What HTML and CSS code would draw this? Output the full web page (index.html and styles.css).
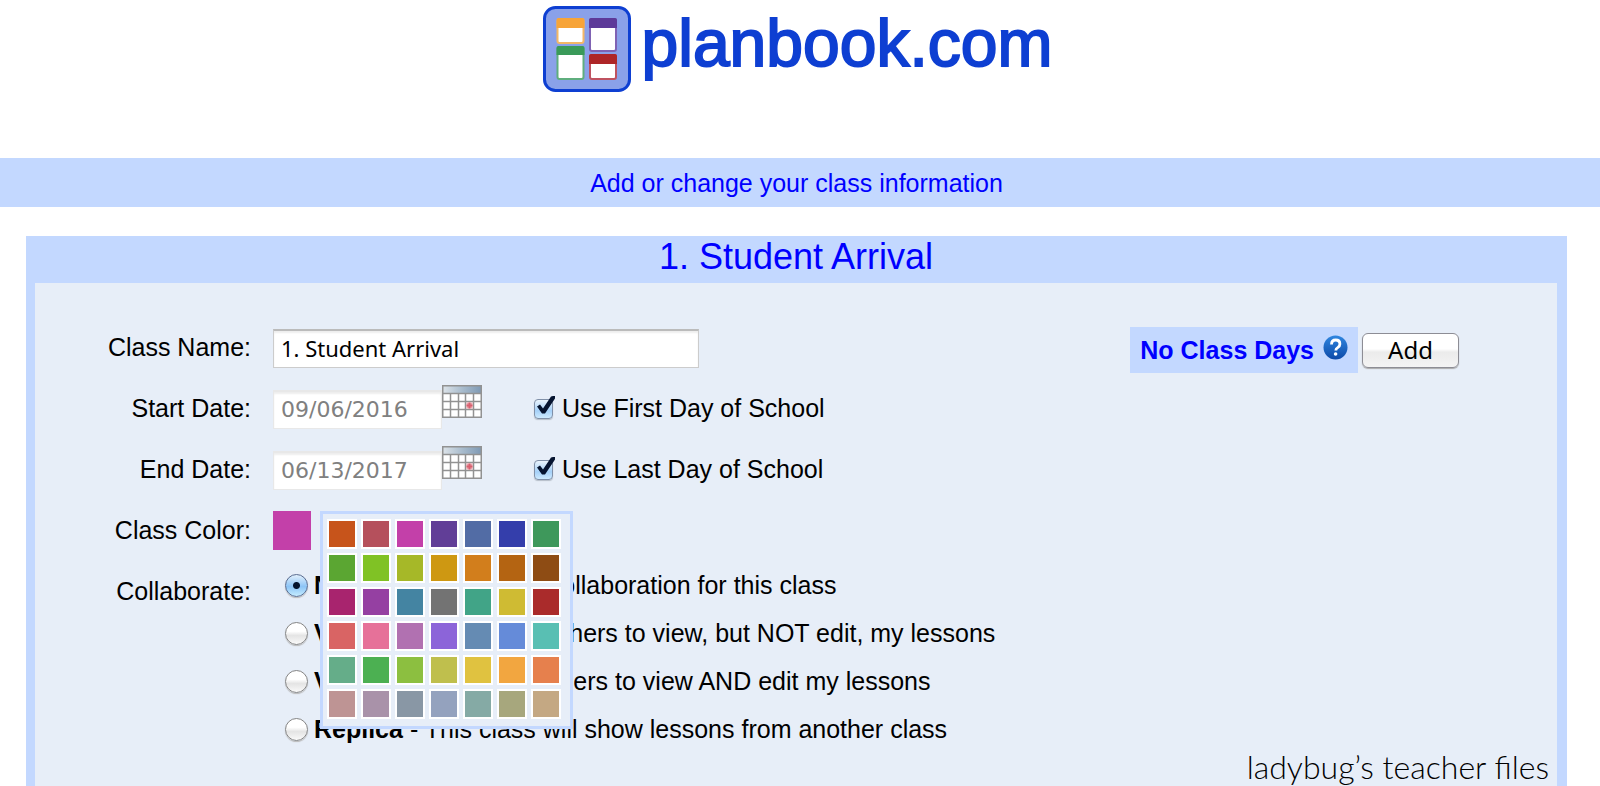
FILE: index.html
```html
<!DOCTYPE html>
<html lang="en">
<head>
<meta charset="utf-8">
<title>planbook.com</title>
<link rel="stylesheet" href="styles.css">
</head>
<body>
  <header class="site-header">
    <svg class="logo-icon" viewBox="0 0 88 86">
      <rect x="1.5" y="1.5" width="85" height="83" rx="11" fill="#8aa1e9" stroke="#0e3fd2" stroke-width="3"/>
      <rect x="14.5" y="13" width="26" height="24" rx="2" fill="#fff" stroke="#f3b766" stroke-width="2"/>
      <path d="M13.5 22V14q0-2 2-2h24q2 0 2 2v8z" fill="#f7a438"/>
      <rect x="47" y="13" width="26" height="32" rx="2" fill="#fff" stroke="#7f62b3" stroke-width="2"/>
      <path d="M46 22V14q0-2 2-2h24q2 0 2 2v8z" fill="#5d3a99"/>
      <rect x="14.5" y="41" width="26" height="32" rx="2" fill="#fff" stroke="#5fae7e" stroke-width="2"/>
      <path d="M13.5 49V42q0-2 2-2h24q2 0 2 2v7z" fill="#3a9a59"/>
      <rect x="47" y="49" width="26" height="24" rx="2" fill="#fff" stroke="#bf5260" stroke-width="2"/>
      <path d="M46 58V50q0-2 2-2h24q2 0 2 2v8z" fill="#ae2527"/>
    </svg>
    <span class="logo-text">planbook.com</span>
  </header>

  <div class="banner">Add or change your class information</div>

  <main class="panel">
    <h1 class="panel-title">1. Student Arrival</h1>
    <form class="panel-body">
      <div class="columns">
        <div class="fields">
          <label class="field-label" for="class_name">Class Name:</label>
          <div class="field"><input class="text-box" type="text" id="class_name" value="1. Student Arrival"></div>

          <label class="field-label" for="start_date">Start Date:</label>
          <div class="field">
            <input class="text-box date-box" type="text" id="start_date" value="09/06/2016" disabled>
            <svg class="calendar" viewBox="0 0 40 33"><use href="#calendar"/></svg>
            <label class="check-label"><input type="checkbox" checked>Use First Day of School</label>
          </div>

          <label class="field-label" for="end_date">End Date:</label>
          <div class="field">
            <input class="text-box date-box" type="text" id="end_date" value="06/13/2017" disabled>
            <svg class="calendar" viewBox="0 0 40 33"><use href="#calendar"/></svg>
            <label class="check-label"><input type="checkbox" checked>Use Last Day of School</label>
          </div>

          <label class="field-label" for="class_color">Class Color:</label>
          <div class="field color-field">
            <button class="color-button" type="button" id="class_color" aria-label="Class color"></button>
            <div class="palette" id="palette"></div>
          </div>

          <span class="field-label" id="collaborate">Collaborate:</span>
          <div class="radio-list" role="radiogroup" aria-labelledby="collaborate">
            <label class="radio-label"><input type="radio" name="collab" checked><span><b>None</b> - I do not want collaboration for this class</span></label>
            <label class="radio-label"><input type="radio" name="collab"><span><b>View</b> - Allow other teachers to view, but NOT edit, my lessons</span></label>
            <label class="radio-label"><input type="radio" name="collab"><span><b>View/Edit</b> - Allow teachers to view AND edit my lessons</span></label>
            <label class="radio-label"><input type="radio" name="collab"><span><b>Replica</b> - This class will show lessons from another class</span></label>
          </div>
        </div>

        <div class="no-class">
          <div class="no-class-title">
            No Class Days
            <svg class="help" viewBox="0 0 25 25">
              <circle cx="12.5" cy="12.5" r="12" fill="url(#blue)"/>
              <path d="M8.5 9.5q0-4.5 4.2-4.5t4.2 4q0 2.3-2.2 3.6-1.9 1.1-1.9 3" fill="none" stroke="#fff" stroke-width="2.8"/>
              <circle cx="12.6" cy="19" r="1.8" fill="#fff"/>
            </svg>
          </div>
          <button class="add-button" type="button">Add</button>
        </div>
      </div>
      <p class="credit">ladybug’s teacher files</p>
    </form>
  </main>

  <svg class="defs">
    <defs>
      <linearGradient id="blue" x2="0" y2="1">
        <stop offset="0" stop-color="#2f86e0"/>
        <stop offset="1" stop-color="#0d4aa8"/>
      </linearGradient>
      <linearGradient id="steel">
        <stop offset="0" stop-color="#dfe5ea"/>
        <stop offset=".5" stop-color="#a9bccd"/>
        <stop offset="1" stop-color="#7d98b3"/>
      </linearGradient>
      <symbol id="calendar" viewBox="0 0 40 33">
        <rect width="40" height="33" fill="#fff"/>
        <rect width="40" height="8" fill="url(#steel)"/>
        <path d="M.75.75h38.5v31.5H.75zM0 8.5h40M0 16.5h40M0 24.5h40M8.5 8v25M16.5 8v25M23.5 8v25M31.5 8v25" fill="none" stroke="#929292" stroke-width="1.5"/>
        <rect x="24.5" y="17.5" width="6" height="6" fill="#e9a3ab"/>
        <path d="M27.5 17.5v6M24.5 20.5h6" stroke="#d9606f" stroke-width="2"/>
      </symbol>
    </defs>
  </svg>

<script>
var colors = [
  "#c7541b", "#b5505c", "#c340a9", "#613e97", "#526ca5", "#343eab", "#3e985b",
  "#5ba632", "#80c225", "#a6b828", "#ce9812", "#d27e1c", "#b46412", "#8e4c14",
  "#a8246e", "#9540a2", "#4484a2", "#737373", "#41a487", "#cfbb33", "#aa2b2b",
  "#d96464", "#e67199", "#b171b1", "#8c64d9", "#658bb3", "#658bd9", "#59bfb3",
  "#65ad89", "#4cb052", "#8cbf40", "#bfbf4d", "#e0c240", "#f2a640", "#e6804d",
  "#be9494", "#a992a9", "#8997a5", "#94a2be", "#85aaa5", "#a7a77d", "#c4a883"
];
var palette = document.getElementById("palette");
var current = document.getElementById("class_color");

colors.forEach(function(color){
  var swatch = document.createElement("button");
  swatch.type = "button";
  swatch.className = "swatch";
  swatch.style.backgroundColor = color;
  swatch.setAttribute("aria-label", color);
  swatch.onclick = function(){ current.style.backgroundColor = color; };
  palette.appendChild(swatch);
});
</script>
</body>
</html>
```
FILE: styles.css
```css
* {
  box-sizing: border-box;
}
body {
  margin: 0;
  min-height: 100vh;
  display: flex;
  flex-direction: column;
  background: #fff;
  color: #000;
  font-family: "Liberation Sans", Arial, sans-serif;
  font-size: 25px;
}
.defs {
  position: absolute;
  width: 0;
  height: 0;
}

/* logo and banner */
.site-header {
  display: flex;
  justify-content: center;
  align-items: flex-start;
  gap: 11px;
  padding: 6px 5px 66px 0;
}
.logo-icon {
  width: 88px;
  height: 86px;
}
.logo-text {
  font-size: 66px;
  line-height: 75px;
  color: #0e3fd2;
  -webkit-text-stroke: 2px #0e3fd2;
}
.banner {
  padding: 1px 7px 0 0;
  background: #c3d8ff;
  color: #00f;
  line-height: 48px;
  text-align: center;
}

/* class panel */
.panel {
  flex: 1;
  display: flex;
  flex-direction: column;
  margin: 29px 33px 0 26px;
  padding: 0 10px 0 9px;
  background: #c3d8ff;
}
.panel-title {
  margin: 0;
  color: #00f;
  font-size: 36px;
  font-weight: normal;
  line-height: 42px;
  padding-bottom: 5px;
  text-align: center;
}
.panel-body {
  flex: 1;
  display: flex;
  flex-direction: column;
  padding-top: 34px;
  background: #e7eef8;
}
.columns {
  display: flex;
  justify-content: space-between;
  align-items: flex-start;
}
.fields {
  display: grid;
  grid-template-columns: 216px auto;
  column-gap: 22px;
}
.field-label {
  line-height: 61px;
  text-align: right;
}
.field {
  display: flex;
  align-items: center;
  height: 61px;
}
.text-box {
  width: 426px;
  height: 39px;
  margin: 2px 0 0;
  padding: 0 7px 2px;
  border: 1px solid #ccc;
  border-top: 2px solid #bbb;
  background: #fff;
  box-shadow: inset 0 2px 2px #eee;
  color: #000;
  font-family: "Noto Sans", sans-serif;
  font-size: 22px;
}
.date-box {
  width: 169px;
  border-color: #e8e8e8;
  color: #808080;
  font-family: "DejaVu Sans", sans-serif;
}
.calendar {
  width: 40px;
  height: 33px;
  margin-bottom: 14px;
}
.check-label {
  display: flex;
  align-items: center;
  gap: 9px;
  margin-left: 52px;
}
input[type=checkbox] {
  appearance: none;
  position: relative;
  width: 19px;
  height: 20px;
  margin: 0;
  border: 1px solid #8090a8;
  border-radius: 4px;
  background: linear-gradient(#eaf4fd, #a5d0f8 60%, #cdeaff);
  box-shadow: 0 1px 1px #b5bdc8;
}
input[type=checkbox]:checked::before {
  content: "";
  position: absolute;
  left: -1px;
  top: -4px;
  width: 21px;
  height: 20px;
  background: #061430;
  clip-path: polygon(3px 11px, 6px 9px, 9px 13px, 17px 1px, 21px 0, 21px 3px, 11px 18px, 8px 18px);
}

/* color picker */
.color-field {
  position: relative;
}
.color-button {
  width: 38px;
  height: 39px;
  padding: 0;
  border: 0;
  background: #c340a9;
}
.palette {
  position: absolute;
  left: 47px;
  top: 11px;
  z-index: 10;
  display: grid;
  grid-template-columns: repeat(7, 30px);
  gap: 4px;
  padding: 5px 9px 7px 4px;
  border: 3px solid #c3d8ff;
  background: #e7eef8;
}
.swatch {
  height: 30px;
  padding: 0;
  border: 2px solid #fff;
}

/* collaborate options */
.radio-list {
  padding-left: 12px;
}
.radio-label {
  display: flex;
  align-items: center;
  gap: 6px;
  height: 48px;
  white-space: nowrap;
}
input[type=radio] {
  appearance: none;
  width: 23px;
  height: 23px;
  margin: 0;
  border: 1px solid #858585;
  border-radius: 50%;
  background: linear-gradient(#fff 40%, #e4e4e4 60%, #fafafa);
  box-shadow: 0 1px 1px #bbb;
}
input[type=radio]:checked {
  border-color: #5a6c90;
  background: radial-gradient(circle, #04142e 3px, transparent 4px), linear-gradient(#e2f0fc, #8cc4f6 55%, #c4ecff);
}

/* no class days */
.no-class {
  display: flex;
  align-items: center;
  gap: 4px;
  margin: 10px 98px 0 0;
}
.no-class-title {
  display: flex;
  align-items: center;
  gap: 9px;
  height: 46px;
  padding: 0 10px;
  background: #c3d8ff;
  color: #00f;
  font-weight: bold;
  white-space: nowrap;
}
.help {
  width: 25px;
  height: 25px;
  margin-bottom: 6px;
}
.add-button {
  width: 97px;
  height: 35px;
  padding: 0;
  border: 1px solid #8d8d95;
  border-radius: 6px;
  background: linear-gradient(#fff 45%, #ebebeb 55%, #f4f4f4);
  box-shadow: 0 1px 1px #aaa;
  color: #000;
  font-family: "Noto Sans", sans-serif;
  font-size: 24px;
  line-height: 30px;
}

.credit {
  margin: auto 8px 0 0;
  padding-bottom: 6px;
  font-family: Lato, sans-serif;
  font-size: 32px;
  font-weight: 300;
  line-height: 26px;
  text-align: right;
}
```
